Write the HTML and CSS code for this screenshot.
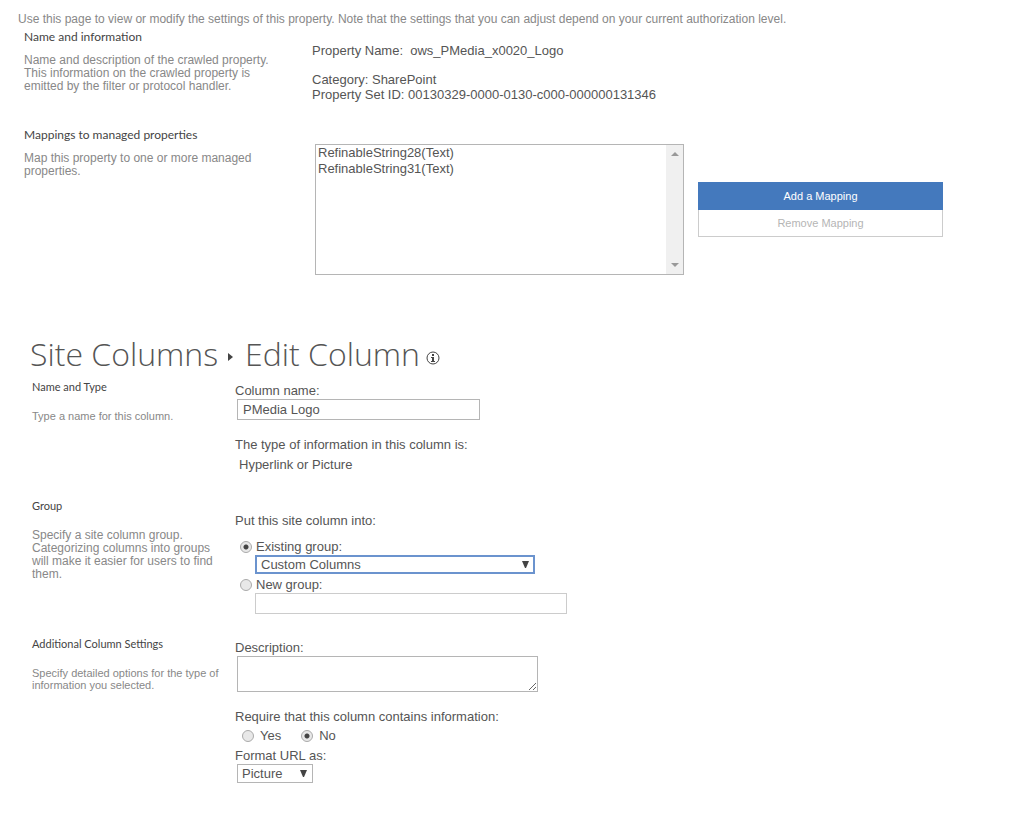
FILE: index.html
```html
<!DOCTYPE html>
<html lang="en">
    <head>
        <meta charset="utf-8">
        <title>Edit Column</title>
        <link rel="stylesheet" href="styles.css">
    </head>
    <body>
        <main>
            <section class="property">
                <p class="intro">Use this page to view or modify the settings of this property. Note that the settings that you can adjust depend on your current authorization level.</p>
                <div class="property-row">
                    <div class="side">
                        <h3>Name and information</h3>
                        <p>Name and description of the crawled property. This information on the crawled property is emitted by the filter or protocol handler.</p>
                    </div>
                    <div class="info">
                        <p>Property Name: &nbsp;ows_PMedia_x0020_Logo</p>
                        <p class="category">Category: SharePoint</p>
                        <p>Property Set ID: 00130329-0000-0130-c000-000000131346</p>
                    </div>
                </div>
                <div class="property-row">
                    <div class="side">
                        <h3 id="mappings-title">Mappings to managed properties</h3>
                        <p>Map this property to one or more managed properties.</p>
                    </div>
                    <div class="mappings">
                        <div class="listbox">
                            <select size="8" aria-labelledby="mappings-title">
                                <option>RefinableString28(Text)</option>
                                <option>RefinableString31(Text)</option>
                            </select>
                            <div class="scrollbar">
                                <svg width="8" height="4" viewBox="0 0 8 4"><path d="M4 0L8 4H0z"/></svg>
                                <svg width="8" height="4" viewBox="0 0 8 4"><path d="M0 0H8L4 4z"/></svg>
                            </div>
                        </div>
                        <div class="buttons">
                            <button type="button" class="add">Add a Mapping</button>
                            <button type="button" class="remove" disabled>Remove Mapping</button>
                        </div>
                    </div>
                </div>
            </section>

            <form class="column">
                <h1>
                    <span>Site Columns</span>
                    <svg class="crumb" width="5" height="8" viewBox="0 0 5 8"><path d="M0 0L5 4L0 8z"/></svg>
                    <span>Edit Column</span>
                    <svg class="about" width="14" height="14" viewBox="0 0 14 14">
                        <circle cx="7" cy="7" r="6"/>
                        <path d="M6 3h2v2H6zM5 6h3v4h1v1H5v-1h1V7H5z"/>
                    </svg>
                </h1>

                <div class="column-row name-row">
                    <div class="side small">
                        <h3>Name and Type</h3>
                        <p>Type a name for this column.</p>
                    </div>
                    <div class="fields">
                        <label for="name">Column name:</label>
                        <input type="text" id="name" class="name" value="PMedia Logo">
                        <p class="type">The type of information in this column is:</p>
                        <p class="type-value">Hyperlink or Picture</p>
                    </div>
                </div>

                <div class="column-row group-row">
                    <div class="side">
                        <h3>Group</h3>
                        <p>Specify a site column group. Categorizing columns into groups will make it easier for users to find them.</p>
                    </div>
                    <div class="fields">
                        <p class="put">Put this site column into:</p>
                        <div class="choice">
                            <input type="radio" name="group" id="existing" checked>
                            <label for="existing">Existing group:</label>
                        </div>
                        <div class="dropdown group-select">
                            <select aria-label="Existing group">
                                <option>Custom Columns</option>
                            </select>
                            <svg width="7" height="7" viewBox="0 0 7 7"><path d="M0 0H7L4 7H3z"/></svg>
                        </div>
                        <div class="choice">
                            <input type="radio" name="group" id="new">
                            <label for="new">New group:</label>
                        </div>
                        <input type="text" class="new-group" aria-label="New group name">
                    </div>
                </div>

                <div class="column-row">
                    <div class="side small">
                        <h3>Additional Column Settings</h3>
                        <p>Specify detailed options for the type of information you selected.</p>
                    </div>
                    <div class="fields settings">
                        <label for="description">Description:</label>
                        <textarea id="description"></textarea>
                        <p>Require that this column contains information:</p>
                        <div class="choice require">
                            <input type="radio" name="require" id="yes">
                            <label for="yes">Yes</label>
                            <input type="radio" name="require" id="no" checked>
                            <label for="no">No</label>
                        </div>
                        <label for="format">Format URL as:</label>
                        <div class="dropdown format-select">
                            <select id="format">
                                <option>Picture</option>
                            </select>
                            <svg width="7" height="7" viewBox="0 0 7 7"><path d="M0 0H7L4 7H3z"/></svg>
                        </div>
                    </div>
                </div>
            </form>
        </main>
    </body>
</html>
```
FILE: styles.css
```css
*{
    box-sizing:border-box;
}
body{
    margin:0;
    background-color:#fff;
    color:#555;
    font:13px/16px "Liberation Sans", Arial, sans-serif;
}
h1,h3,p{
    margin:0;
    font-weight:normal;
}
input,select,textarea,button{
    margin:0;
    font:inherit;
    color:inherit;
}
.property{
    padding:11px 18px 0;
}
.intro{
    color:#888;
    font-size:12px;
}
.property-row{
    display:grid;
    grid-template-columns:288px 1fr;
    padding-left:6px;
    min-height:98px;
}
.side h3{
    color:#444;
    font:12px/20px Lato, "Open Sans", sans-serif;
}
.side p{
    color:#888;
    font-size:12px;
    line-height:13px;
}
.property .side{
    width:250px;
}
.property .side p{
    margin-top:7px;
}
.info{
    padding-top:16px;
    line-height:15px;
}
.category{
    margin-top:14px;
}
.mappings{
    display:flex;
    align-items:center;
    align-self:start;
    gap:14px;
    padding:19px 0 0 3px;
}
.listbox{
    display:flex;
    width:369px;
    height:131px;
    border:1px solid #b5b5b5;
}
.listbox select{
    flex:1;
    padding:0;
    border:0;
    background:#fff;
    outline:0;
    overflow:hidden;
}
.listbox option{
    min-height:16px;
    padding:0 2px;
}
.scrollbar{
    display:flex;
    flex-direction:column;
    justify-content:space-between;
    align-items:center;
    width:17px;
    padding:7px 0;
    background-color:#f0f0f0;
    fill:#999;
}
.buttons{
    display:flex;
    flex-direction:column;
    width:245px;
}
.buttons button{
    height:27px;
    border:1px solid #ccc;
    background-color:#fff;
    font-size:11px;
}
.buttons .add{
    height:28px;
    border-color:#4479bd;
    background-color:#4479bd;
    color:#fff;
}
.buttons .remove{
    border-top:0;
    color:#b5b5b5;
}
.column{
    padding:55px 32px 30px;
}
h1{
    display:flex;
    align-items:center;
    margin-left:-2px;
    color:#555;
    font:300 32px/47px "Open Sans", "Noto Sans", sans-serif;
}
h1 svg{
    fill:#444;
}
.crumb{
    margin:6px 12px 0 10px;
}
.about{
    margin:8px 0 0 6px;
}
.about circle{
    fill:none;
    stroke:#444;
}
.column-row{
    display:grid;
    grid-template-columns:203px 1fr;
}
.name-row{
    min-height:119px;
}
.group-row{
    min-height:138px;
}
.column .side{
    width:195px;
}
.column .side h3{
    font-size:11px;
}
.column .side p{
    margin-top:13px;
}
.column .small p{
    font-size:11px;
    line-height:12px;
}
.fields{
    padding-top:6px;
}
.fields label,.fields input,.fields textarea{
    display:block;
}
.fields input[type=text],.fields textarea{
    margin-left:2px;
    border:1px solid #b5b5b5;
    outline:0;
}
.fields input[type=text]{
    height:21px;
    padding:0 5px;
}
.name{
    width:243px;
}
.type{
    margin-top:17px;
}
.type-value{
    margin:4px 0 0 4px;
}
.put{
    margin:11px 0 10px;
}
.choice{
    display:flex;
    align-items:center;
    padding-left:5px;
}
.choice input{
    appearance:none;
    width:12px;
    height:12px;
    margin-right:4px;
    border:1px solid #aaa;
    border-radius:50%;
    background-color:#e8e8e8;
}
.choice input:checked{
    background-image:radial-gradient(circle, #444 0, #444 2px, transparent 3px);
}
.dropdown{
    display:grid;
    align-items:center;
    margin-left:2px;
}
.dropdown select,.dropdown svg{
    grid-area:1 / 1;
}
.dropdown select{
    appearance:none;
    width:100%;
    height:19px;
    padding:0 4px;
    border:1px solid #b5b5b5;
    border-radius:0;
    background-color:#fff;
    outline:0;
}
.dropdown svg{
    justify-self:end;
    margin-right:6px;
    fill:#444;
    pointer-events:none;
}
.group-select{
    width:280px;
    margin:0 0 3px 20px;
}
.group-select select{
    border:2px solid #6b93ce;
}
.fields input.new-group{
    width:312px;
    margin-left:20px;
    border-color:#ccc;
}
.settings textarea{
    width:301px;
    height:36px;
    margin-bottom:17px;
    resize:both;
}
.require{
    padding:3px 0 4px 7px;
}
.require input{
    margin-right:6px;
}
.require label{
    margin-right:20px;
}
.format-select{
    width:76px;
}
```
